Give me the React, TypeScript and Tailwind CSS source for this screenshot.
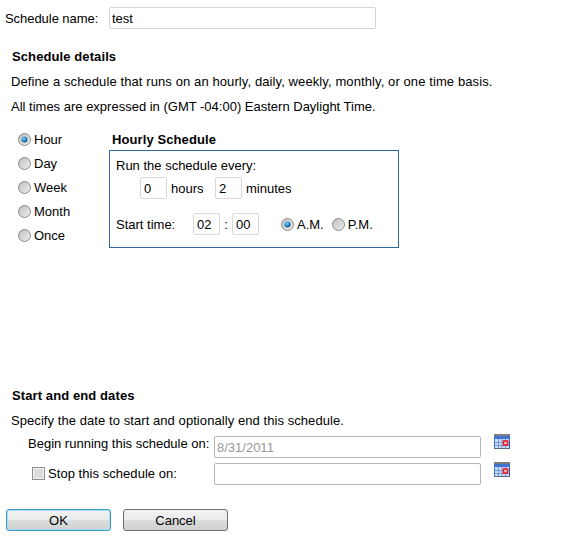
const Radio = ({ on }: { on?: boolean }) => (
  <svg width="13" height="13" viewBox="0 0 13 13" className="shrink-0">
    <defs>
      <linearGradient id="rg" x1="0" y1="0" x2="1" y2="1">
        <stop offset="0" stopColor="#bdbdbd" />
        <stop offset="1" stopColor="#f0f0f0" />
      </linearGradient>
      <radialGradient id="rb" cx="0.4" cy="0.35" r="0.7">
        <stop offset="0" stopColor="#7fd0f4" />
        <stop offset="0.6" stopColor="#1c86c0" />
        <stop offset="1" stopColor="#0f4a78" />
      </radialGradient>
    </defs>
    <circle cx="6.5" cy="6.5" r="6" fill="url(#rg)" stroke="#8a8b8b" />
    {on ? <circle cx="6.5" cy="6.5" r="3" fill="url(#rb)" /> : null}
  </svg>
);

const Cal = () => (
  <svg width="16" height="15" viewBox="0 0 16 15" className="shrink-0">
    <rect x="0" y="1" width="16" height="14" fill="#3f74d0" />
    <rect x="0" y="0" width="16" height="2" fill="#c8c8c8" />
    <path d="M1 0v2M3 0v2M5 0v2M7 0v2M9 0v2M11 0v2M13 0v2M15 0v2" stroke="#333" strokeWidth="1" />
    <rect x="1" y="5" width="14" height="9" fill="#cfdef7" />
    <path d="M1 8.5h14M1 11.5h14M4.5 5v9M8 5v9M11.5 5v9" stroke="#6f97dc" strokeWidth="1" />
    <rect x="9.5" y="7" width="4" height="4" fill="#ffd0d0" stroke="#ee1c25" strokeWidth="1.6" />
    <rect x="15" y="5" width="1" height="10" fill="#2d5aa8" />
    <rect x="0" y="14" width="16" height="1" fill="#5a6a8a" />
  </svg>
);

const Small = ({ v }: { v: string }) => (
  <div className="w-[27px] h-[22px] border border-[#d9d9d9] rounded-[2px] bg-white flex items-center pl-[3px]">{v}</div>
);

const Period = ({ label, on }: { label: string; on?: boolean }) => (
  <div className="h-[24px] flex items-center gap-[3px]">
    <Radio on={on} />
    <span>{label}</span>
  </div>
);

const Wide = ({ v, muted }: { v?: string; muted?: boolean }) => (
  <div className={`w-[267px] h-[22px] border border-[#b5b5b5] rounded-[2px] bg-white pl-[2px] flex items-center ${muted ? "text-[#999]" : ""}`}>{v}</div>
);

export default function App() {
  return (
    <div className="w-[583px] h-[541px] bg-white text-black text-[13px] leading-[15px] overflow-hidden relative font-['Liberation_Sans',Arial,sans-serif]">
      <div className="flex items-center pl-[5px] pt-[7px]">
        <span className="w-[104px] tracking-[-0.05px]">Schedule name:</span>
        <div className="w-[267px] h-[22px] border border-[#d5d5d5] rounded-[2px] pl-[2px] flex items-center">test</div>
      </div>

      <div className="pl-[12px] pt-[20px] font-bold tracking-[0.1px]">Schedule details</div>
      <div className="pl-[11px] pt-[10px] tracking-[0.1px]">Define a schedule that runs on an hourly, daily, weekly, monthly, or one time basis.</div>
      <div className="pl-[11px] pt-[10px]">All times are expressed in (GMT -04:00) Eastern Daylight Time.</div>

      <div className="flex pl-[18px] pt-[18px]">
        <div className="w-[91px] -mt-[5px]">
          <Period label="Hour" on />
          <Period label="Day" />
          <Period label="Week" />
          <Period label="Month" />
          <Period label="Once" />
        </div>
        <div>
          <div className="font-bold pl-[3px] tracking-[0.1px]">Hourly Schedule</div>
          <div className="w-[290px] h-[98px] mt-[3px] border border-[#336699] pl-[6px] pt-[7px]">
            <div>Run the schedule every:</div>
            <div className="flex items-center pl-[24px] mt-[4px]">
              <Small v="0" />
              <span className="ml-[4px] w-[44px]">hours</span>
              <Small v="2" />
              <span className="ml-[4px]">minutes</span>
            </div>
            <div className="flex items-center mt-[14px]">
              <span className="w-[77px]">Start time:</span>
              <Small v="02" />
              <span className="w-[12px] text-center">:</span>
              <Small v="00" />
              <div className="ml-[22px] flex items-center gap-[3px]"><Radio on /><span>A.M.</span></div>
              <div className="ml-[8px] flex items-center gap-[3px]"><Radio /><span>P.M.</span></div>
            </div>
          </div>
        </div>
      </div>

      <div className="pl-[12px] pt-[140px] font-bold tracking-[0.1px]">Start and end dates</div>
      <div className="pl-[11px] pt-[10px] tracking-[0.07px]">Specify the date to start and optionally end this schedule.</div>
      <div className="flex items-center pl-[28px] pt-[8px]">
        <span className="w-[186px] -mt-[7px]">Begin running this schedule on:</span>
        <Wide v="8/31/2011" muted />
        <span className="ml-[13px] -mt-[11px]"><Cal /></span>
      </div>
      <div className="flex items-center pl-[32px] pt-[5px]">
        <div className="w-[182px] flex items-center gap-[3px] -mt-[1px]">
          <div className="w-[13px] h-[13px] border border-[#8e8f8f] bg-[#dcdcdc] shadow-[inset_0_0_0_1px_#f2f2f2]" />
          <span className="tracking-[0.05px]">Stop this schedule on:</span>
        </div>
        <Wide />
        <span className="ml-[13px] -mt-[9px]"><Cal /></span>
      </div>

      <div className="flex pl-[6px] pt-[24px] gap-[12px]">
        <button className="w-[105px] h-[22px] rounded-[3px] border border-[#3c9ac9] bg-[linear-gradient(#f2f2f2_0%,#ebebeb_48%,#dddddd_52%,#cfcfcf_100%)] shadow-[inset_0_0_0_1px_#a8dff5]">OK</button>
        <button className="w-[105px] h-[22px] rounded-[3px] border border-[#707070] bg-[linear-gradient(#f2f2f2_0%,#ebebeb_48%,#dddddd_52%,#cfcfcf_100%)]">Cancel</button>
      </div>
    </div>
  );
}
